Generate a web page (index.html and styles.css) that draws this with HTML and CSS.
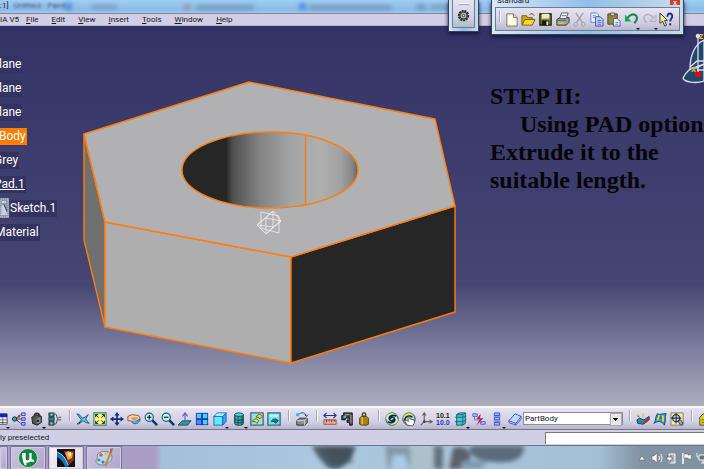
FILE: index.html
```html
<!DOCTYPE html>
<html lang="en">
<head>
<meta charset="utf-8">
<title>CATIA V5 - Part Design</title>
<link rel="stylesheet" href="styles.css">
</head>
<body>
<header>
  <div class="titlebar">
    <svg class="glass" viewBox="0 0 704 13" preserveAspectRatio="none" aria-hidden="true">
      <g fill="#5d7fa3" opacity=".55">
        <rect x="92" y="5" width="25" height="4"/><rect x="196" y="5" width="50" height="5"/><rect x="220" y="5" width="34" height="5"/><rect x="309" y="5" width="82" height="5"/><rect x="416" y="4" width="10" height="6"/><rect x="430" y="5" width="20" height="4"/>
      </g>
      <g fill="#3f84dc" opacity=".8"><rect x="65" y="3" width="7" height="7"/><rect x="299" y="3" width="7" height="7"/></g>
      <rect x="184" y="4" width="6" height="6" fill="#a06a86" opacity=".6"/>
    </svg>
    <span class="doc-title">:1]</span>
    <span class="ghost-title">Untitled - Paint</span>
  </div>
  <nav class="menubar" aria-label="Main menu">
    <button class="brand">IA V5</button>
    <button><u>F</u>ile</button>
    <button><u>E</u>dit</button>
    <button><u>V</u>iew</button>
    <button><u>I</u>nsert</button>
    <button><u>T</u>ools</button>
    <button><u>W</u>indow</button>
    <button><u>H</u>elp</button>
  </nav>
</header>

<main class="viewport">
  <svg class="model" viewBox="0 26 704 380" preserveAspectRatio="xMinYMin meet" role="img" aria-label="Hexagonal nut solid">
    <defs>
      <linearGradient id="bore" x1="182" x2="358" y1="0" y2="0" gradientUnits="userSpaceOnUse">
        <stop offset="0" stop-color="#262626"/><stop offset=".25" stop-color="#262626"/><stop offset=".29" stop-color="#505050"/><stop offset=".45" stop-color="#858585"/><stop offset=".62" stop-color="#a4a4a4"/><stop offset=".78" stop-color="#b0b0b0"/><stop offset=".9" stop-color="#a2a2a2"/><stop offset=".97" stop-color="#858585"/><stop offset="1" stop-color="#5c5c5c"/>
      </linearGradient>
    </defs>
    <g stroke="#ff7d0a" stroke-width="1.4" stroke-linejoin="round">
      <path d="M84 134 105 222V327L84 240Z" fill="#707070"/>
      <path d="M105 222 291 257V363L105 327Z" fill="#aeaeae"/>
      <path d="M291 257 455 206V312L291 363Z" fill="#262626"/>
      <path d="M249 82 435 119 455 206 291 257 105 222 84 134Z" fill="#b1b1b3"/>
      <ellipse cx="270" cy="170" rx="88" ry="38" fill="url(#bore)"/>
      <path d="M305.500 135V205" fill="none"/>
    </g>
    <path d="M261 212 279 216V233L261 228ZM273 211 257 225 266 234 281 221ZM273 211V227L266 234V218ZM257 225 273 227 281 221 266 218Z" fill="none" stroke="#efefef" stroke-width=".8"/>
    <g stroke="#e6d9f4" stroke-width="1.3">
      <path d="M704 40C695 44 690 55 690 69L704 64Z" fill="#1e4a68"/>
      <path d="M683 78C686 72 690 67 697 68L704 64V81C696 84 684 82 683 78Z" fill="#1e4a68"/>
      <path d="M690 67 697 61H704M698 36V73M697 70H704" fill="none"/>
    </g>
    <circle cx="698" cy="36" r="2.300" fill="#e6d9f4"/>
    <rect x="695" y="72" width="6" height="5" fill="#e00a0a"/>
    <text x="699" y="39" class="axis">z</text><text x="691" y="72" class="axis">x</text>
  </svg>

  <ul class="tree">
    <li><span>lane</span></li>
    <li><span>lane</span></li>
    <li><span>lane</span></li>
    <li><span class="selected">Body</span></li>
    <li class="scrolled"><span>Grey</span></li>
    <li class="scrolled"><span class="linked">Pad.1</span></li>
    <li class="child">
      <svg viewBox="0 0 9 20" aria-hidden="true"><path d="M0 0H9V20H0Z" fill="#8b93a7"/><path d="M1 1H8V19H1Z" fill="none" stroke="#c9ced8" stroke-dasharray="1 1"/><path d="M1 17C2 11 0 8 3 7S5 14 8 17ZM2 3H6V5H2Z" fill="#c6d1e1"/><path d="M4 7 7 13" stroke="#30405c"/></svg>
      <span>Sketch.1</span>
    </li>
    <li class="flush"><span>Material</span></li>
  </ul>

  <div class="note">
    <p>STEP II:</p>
    <p class="indent">Using PAD option</p>
    <p>Extrude it to the</p>
    <p>suitable length.</p>
  </div>
</main>

<section class="toolbar" aria-label="View and tools">
  <div class="group first">
    <button class="menu" aria-label="Table"><svg viewBox="0 0 16 16"><path d="M1 2H15V14H1Z" fill="#fff" stroke="#444"/><path d="M1 2H15V6H1Z" fill="#1420c0"/><path d="M1 9H15M1 12H15M6 6V14M10 6V14" stroke="#555"/></svg></button>
    <button aria-label="Structure"><svg viewBox="0 0 16 16"><path d="M4 8 10 3M4 8H11M4 8 10 13" stroke="#333" fill="none"/><circle cx="3" cy="8" r="2.500" fill="#3aa7b0" stroke="#123"/><circle cx="8" cy="5" r="1.500" fill="#c33"/><path d="M11 1H15V4H11ZM11 6.500H15V9.500H11ZM11 12H15V15H11Z" fill="#b5c5ff" stroke="#2536d8"/></svg></button>
    <button class="menu" aria-label="Filter"><svg viewBox="0 0 16 16"><path d="M2 6 7 3 13 5V12L8 15 3 13Z" fill="#555" stroke="#111"/><path d="M5 5C5 1 11 0 11 5" fill="none" stroke="#333" stroke-width="2"/><path d="M7 8 12 6V12L8 13Z" fill="#8d8d8d"/><circle cx="9" cy="10" r="1.500" fill="#222"/></svg></button>
    <button aria-label="Relations"><svg viewBox="0 0 16 16"><path d="M1 1H7V5H1ZM1 6H7V10H1ZM1 11H7V15H1Z" fill="#2a8790" stroke="#234"/><path d="M3 2H5V4H3ZM3 12H5V14H3Z" fill="#d9c65e"/><path d="M8 2C11 2 9 8 12 8 9 8 11 14 8 14M12 6H15M12 9H15" fill="none" stroke="#333"/></svg></button>
  </div>
  <i class="sep"></i>
  <div class="group">
    <button aria-label="Fly mode"><svg viewBox="0 0 16 16"><path d="M1 2 4 3 7 7 10 6 14 3 11 8 15 13 11 12 8 10 3 14 6 9Z" fill="#4fc6e4" stroke="#1c5578"/><path d="M1 14 5 11" stroke="#222"/></svg></button>
    <button aria-label="Fit all in"><svg viewBox="0 0 16 16"><path d="M1 1H15V15H1Z" fill="#f7f37c" stroke="#258b8b" stroke-width="1.300"/><path d="M3 3 6.500 6.500M13 3 9.500 6.500M3 13 6.500 9.500M13 13 9.500 9.500M3 6V3H6M10 3H13V6M3 10V13H6M10 13H13V10" stroke="#111" fill="none"/></svg></button>
    <button aria-label="Pan"><svg viewBox="0 0 16 16"><path d="M8 0 11 4H9V7H12V5L16 8 12 11V9H9V12H11L8 16 5 12H7V9H4V11L0 8 4 5V7H7V4H5Z" fill="#172c82"/></svg></button>
    <button aria-label="Rotate"><svg viewBox="0 0 16 16"><path d="M1 5 6 3 13 4 15 7 14 10 9 12 4 10 1 10Z" fill="#ffd2a7" stroke="#7b502e"/><path d="M5 7H12M6 9H11" stroke="#a06c44"/><path d="M5 11C8 15 14 14 15 8L11 10" fill="#5aa9eb" stroke="#245bae"/></svg></button>
    <button aria-label="Zoom in"><svg viewBox="0 0 16 16"><path d="M9 9 15 15" stroke="#11366d" stroke-width="3"/><circle cx="6" cy="6" r="4.700" fill="#bdf8ff" stroke="#24527d" stroke-width="1.300"/><path d="M3.500 6H8.500M6 3.500V8.500" stroke="#111" stroke-width="1.300"/></svg></button>
    <button aria-label="Zoom out"><svg viewBox="0 0 16 16"><path d="M9 9 15 15" stroke="#11366d" stroke-width="3"/><circle cx="6" cy="6" r="4.700" fill="#bdf8ff" stroke="#24527d" stroke-width="1.300"/><path d="M3.500 6H8.500" stroke="#111" stroke-width="1.300"/></svg></button>
    <button aria-label="Normal view"><svg viewBox="0 0 16 16"><path d="M5 10H15L11 15H0Z" fill="#3195a9" stroke="#155363"/><path d="M8 12V2M5 5 8 1 11 5" fill="none" stroke="#6b5bc4" stroke-width="1.300"/></svg></button>
    <button aria-label="Multi view"><svg viewBox="0 0 16 16"><path d="M1 1H15V15H1Z" fill="#24369b"/><path d="M2 2H7V7H2ZM9 9H14V14H9ZM9 2H14V7H9Z" fill="#35d7ff"/><path d="M2 9H7V14H2Z" fill="#438cff"/></svg></button>
    <button class="menu" aria-label="Isometric view"><svg viewBox="0 0 16 16"><path d="M1 5H11V15H1Z" fill="#65eaff" stroke="#1263c9"/><path d="M1 5 5 1H15L11 5Z" fill="#b7faff" stroke="#1263c9"/><path d="M11 5 15 1V11L11 15Z" fill="#29a9ee" stroke="#1263c9"/></svg></button>
    <button class="menu" aria-label="Shading"><svg viewBox="0 0 16 16"><path d="M3 3V13C3 16 13 16 13 13V3" fill="#26808b" stroke="#173b45"/><path d="M5 5V14M9 5V15" stroke="#65c7c9"/><ellipse cx="8" cy="3" rx="5" ry="2" fill="#63d2dc" stroke="#173b45"/><path d="M3 8C5 10 11 10 13 8M3 11C5 13 11 13 13 11" fill="none" stroke="#153943"/></svg></button>
    <button aria-label="Hide or show"><svg viewBox="0 0 16 16"><path d="M1 1H15V15H1Z" fill="#8fe6ea" stroke="#4b6573" stroke-width="1.500"/><path d="M3 11C4 7 8 7 10 10L8 13 6 11ZM7 6C8 2 12 2 14 5L11 8 10 6Z" fill="#f1d844" stroke="#5d561d"/></svg></button>
    <button aria-label="Swap visible space"><svg viewBox="0 0 16 16"><path d="M1 1H15V15H1Z" fill="#6fe6ef" stroke="#4b6573" stroke-width="1.500"/><path d="M3 3H13V6H3Z" fill="#b5ffff"/><path d="M5 11C6 7 11 7 13 10L10 13 8 11Z" fill="#277287" stroke="#114758"/></svg></button>
  </div>
  <i class="sep"></i>
  <div class="group"><button aria-label="Apply material"><svg viewBox="0 0 16 16"><path d="M2 10 5 7H14V12L11 15H2Z" fill="#8b8b8f" stroke="#222"/><path d="M2 10H11L14 7M11 10V15" stroke="#ddd" fill="none"/><path d="M4 3C7 0 12 0 13 5L11 3M13 5 15 3" fill="none" stroke="#2a3d90"/><circle cx="3" cy="3" r="2" fill="#20c2df"/></svg></button></div>
  <i class="sep"></i>
  <div class="group">
    <button aria-label="Measure between"><svg viewBox="0 0 16 16"><path d="M1 4H15M4 1 1 4 4 7M12 1 15 4 12 7" fill="none" stroke="#2230a0" stroke-width="1.300"/><path d="M1 9H15V14H1Z" fill="#f4b09b" stroke="#914332"/><path d="M4 9V12M7 9V11M10 9V12M13 9V11" stroke="#632"/></svg></button>
    <button aria-label="Measure item"><svg viewBox="0 0 16 16"><path d="M4 1H14V15H11V12H8V9H11V7H6V9H2V4H4Z" fill="#444" stroke="#111"/><path d="M4 4H7V7H4Z" fill="#62b4a4"/><path d="M12.500 3V13M6 3H11" stroke="#bbb"/></svg></button>
    <button aria-label="Measure inertia"><svg viewBox="0 0 16 16"><circle cx="8" cy="3" r="2" fill="none" stroke="#443300" stroke-width="1.500"/><path d="M3 7 5 5H11L13 7V14L11 15H5L3 14Z" fill="#a8831d" stroke="#4d3b04"/><path d="M6 6V14" stroke="#e7c558" stroke-width="1.500"/></svg></button>
  </div>
  <i class="sep"></i>
  <div class="group">
    <button aria-label="Update"><svg viewBox="0 0 16 16"><circle cx="8" cy="8" r="7" fill="#b6ece0" stroke="#12305a"/><path d="M2 8C2 3 8 1 12 4M14 8C14 13 8 15 4 12" fill="none" stroke="#e9ef68" stroke-width="2"/><path d="M13 5C9 2 4 5 5 8S9 11 10 8M3 11C7 14 12 11 11 8S7 5 6 8" fill="none" stroke="#08254b" stroke-width="1.700"/></svg></button>
    <button aria-label="Manual update"><svg viewBox="0 0 16 16"><circle cx="8" cy="8" r="7" fill="#b7dfbd" stroke="#15354c"/><path d="M2 7C4 2 9 1 12 4" fill="none" stroke="#dee150" stroke-width="2"/><path d="M3 10C3 5 8 3 12 6" fill="none" stroke="#08254b" stroke-width="1.500"/><path d="M6 15 3 10 5 9 7 11V5H9V8L14 9V13L12 16Z" fill="#fff" stroke="#444"/></svg></button>
    <button aria-label="Axis system"><svg viewBox="0 0 16 16"><path d="M6 2V11H14M6 11 2 15M4 4 6 1 8 4M12 9 15 11 12 13" fill="none" stroke="#6a6051" stroke-width="1.300"/><circle cx="6" cy="11" r="1.500" fill="#444"/></svg></button>
    <button aria-label="Mean dimensions"><svg viewBox="0 0 16 16"><text x="0" y="7" class="dim">10.1</text><text x="0" y="15" class="dim blue">10.0</text></svg></button>
    <button class="menu" aria-label="Solid section"><svg viewBox="0 0 16 16"><path d="M3 3 6 1H13V13L10 15H3Z" fill="#42c9d0" stroke="#16515b"/><path d="M3 3H10V15M10 3 13 1M1 6H10L14 5M1 11H10L14 9" fill="none" stroke="#176470"/></svg></button>
    <button aria-label="Break relation"><svg viewBox="0 0 16 16"><path d="M1 2H6V5H1ZM10 11H15V14H10Z" fill="#b7c7ff" stroke="#4555ce"/><path d="M3 5V9H9V12H11" fill="none" stroke="#5767c6"/><path d="M10 2 5 8H9L5 15 13 7H9Z" fill="#cc1537"/></svg></button>
    <button class="menu" aria-label="Stack"><svg viewBox="0 0 16 16"><path d="M5 1H11V4H5ZM5 6H11V9H5ZM5 12H11V15H5Z" fill="#97b5ff" stroke="#3447da"/><path d="M4 4.500H12M4 10.500H12" stroke="#5763bd"/></svg></button>
    <button aria-label="Only current body"><svg viewBox="0 0 16 16"><path d="M1 10 8 2 15 5 9 13Z" fill="#bcd8ff" stroke="#304bd8"/><path d="M1 10V12L9 15 15 8V5M9 13V15" fill="none" stroke="#304bd8"/></svg></button>
  </div>
  <label class="body-picker"><select aria-label="Current body"><option>PartBody</option></select></label>
  <i class="sep"></i>
  <div class="group">
    <button aria-label="Draft analysis"><svg viewBox="0 0 16 16"><path d="M1 9 4 7 9 9 15 5V9L8 14 2 13Z" fill="#218c9c" stroke="#103d5a"/><path d="M8 12 15 6V9L9 14Z" fill="#c91e31"/><path d="M2 2 5 5M8 1V6" stroke="#d8b817"/><path d="M1 4 4 6" stroke="#d22"/></svg></button>
    <button aria-label="Curvature analysis"><svg viewBox="0 0 16 16"><path d="M1 13C4 10 2 6 5 2 8 4 12 1 15 2 13 6 15 10 13 15 10 10 5 10 1 13Z" fill="#24a9cf" stroke="#123a70"/><path d="M6 4C9 5 4 7 6 9M12 4C10 6 13 8 11 11" fill="none" stroke="#eedf34" stroke-width="2"/><path d="M8 5 9 8" stroke="#d72b24" stroke-width="2"/></svg></button>
    <button aria-label="Tap and thread analysis"><svg viewBox="0 0 16 16"><path d="M1 1H15V15H1Z" fill="#f1ec91" stroke="#777"/><circle cx="7" cy="7" r="4" fill="#d7ddb2" stroke="#263861" stroke-width="1.500"/><path d="M7 1V13M1 7H13M10 10 14 14" stroke="#263861" stroke-width="1.300"/><path d="M9 10 12 9 15 13 12 15Z" fill="#9da0c9" stroke="#263861"/></svg></button>
  </div>
  <i class="sep"></i>
  <div class="group"><button aria-label="Catalog"><svg viewBox="0 0 16 16"><path d="M2 6 6 2H15V13L11 15H2Z" fill="#e1c931" stroke="#4d4718"/><path d="M4 9H12M4 12H12" stroke="#665d20"/></svg></button></div>
</section>

<section class="status">
  <output>ly preselected</output>
  <input type="text" aria-label="Power input">
</section>

<footer class="taskbar">
  <svg class="wallpaper" viewBox="0 0 704 24" preserveAspectRatio="none" aria-hidden="true">
    <g class="smudge">
      <path d="M312 0H356Q350 20 338 24H330Q318 14 312 0Z" fill="#4c5b69"/>
      <path d="M320 0H352V18H334Z" fill="#3f4954" opacity=".6"/>
      <path d="M385 0H412V24H388Z" fill="#8499a8"/><path d="M410 0H435V24H410Z" fill="#acc0c9"/>
      <path d="M393 9H405L409 24H390Z" fill="#a8c9ea"/>
      <path d="M434 0H443V24H434Z" fill="#627280"/><path d="M453 2Q472 -2 470 14L460 24H449Z" fill="#5c6068"/>
      <path d="M470 0H524Q524 18 500 17T470 7Z" fill="#5b6b79"/><path d="M462 15H490L480 24H460Z" fill="#7f9aad"/>
    </g>
  </svg>
  <nav class="tasks" aria-label="Open programs">
    <button class="task cut" aria-label="Pinned program"></button>
    <button class="task" aria-label="uTorrent"><svg viewBox="0 0 20 20"><circle cx="10" cy="10" r="9.500" fill="#128442" stroke="#e7f4e9" stroke-width=".7"/><path d="M6.500 5V10.500Q6.500 13.500 9.500 13.500T12.500 10V5M12.500 10Q12.500 13.500 16 12.500M5 5Q5.500 14 8 17" fill="none" stroke="#fff" stroke-width="2.300"/></svg></button>
    <button class="task active" aria-label="CATIA"><svg viewBox="0 0 20 20"><path d="M1 1H19V19H1Z" fill="#111018"/><path d="M8 3H18V12L13 17Z" fill="#88350e"/><path d="M9 5 12 3 17 5 16 10 12 12Z" fill="#ff9d36"/><path d="M12 5 15 4V8L13 9Z" fill="#fff6bd"/><path d="M1 4Q10 7 13 18L9 19Q7 12 1 9Z" fill="#1678c0"/><path d="M1 4Q9 7 12 17" fill="none" stroke="#86d8ff"/></svg></button>
    <button class="task" aria-label="Paint"><svg viewBox="0 0 20 20"><path d="M3 7C7 1 18 3 18 9S10 19 4 16C-1 13 5 12 3 7Z" fill="#b8d9ed" stroke="#628eb1"/><circle cx="7" cy="7" r="1.800" fill="#e25743"/><circle cx="12" cy="6" r="1.600" fill="#e3bd37"/><circle cx="5" cy="12" r="1.600" fill="#4aa266"/><circle cx="9" cy="14" r="1.600" fill="#407bc8"/><path d="M11 18 17 4" stroke="#d28232" stroke-width="2"/><path d="M16 5 16 1 19 0 18 5Z" fill="#a57144"/></svg></button>
  </nav>
  <div class="tray">
    <button aria-label="Show hidden icons"><svg viewBox="0 0 12 12"><path d="M3 8 6 4 9 8Z" fill="#fff" stroke="#66737d" stroke-width=".7"/></svg></button>
    <button aria-label="Volume"><svg viewBox="0 0 12 12"><path d="M1 4H3L6 1V11L3 8H1Z" fill="#fff" stroke="#5c6a75" stroke-width=".6"/><path d="M8 4Q9 6 8 8M10 2Q12 6 10 10" fill="none" stroke="#f4f7f9"/></svg></button>
    <button aria-label="Power"><svg viewBox="0 0 12 12"><path d="M3 2H9V11H3Z" fill="#a9b4bd" stroke="#f8fafb"/><path d="M1 5H6V8H4V11H3V8H1ZM2 3V5M5 3V5" fill="#fff" stroke="#4d5862" stroke-width=".6"/></svg></button>
    <button aria-label="Action center"><svg viewBox="0 0 12 12"><path d="M2 1V12" stroke="#fff" stroke-width="1.500"/><path d="M3 2H7V3H11L10 5 11 7H7V6H3Z" fill="#f6f8f9" stroke="#5a6670" stroke-width=".5"/></svg></button>
    <button aria-label="Network"><svg viewBox="0 0 12 12"><path d="M3 3H11V8H3ZM5 11H10M7 8V11M1 1V5H3" fill="#66737d" stroke="#f5f7f8"/></svg></button>
  </div>
</footer>

<section class="float compact" aria-label="Workbench">
  <div class="float-body"><i class="grip flat"></i>
    <button aria-label="Part Design"><svg viewBox="0 0 16 16"><path d="M2 3V15L14 14Z" fill="#8fd6bd"/><circle cx="8" cy="7" r="5" fill="#a6a6a6" stroke="#222" stroke-width="2" stroke-dasharray="2 1"/><circle cx="8" cy="7" r="3.800" fill="#b9b9b9" stroke="#333" stroke-width="1.200"/><circle cx="8" cy="7" r="1.300" fill="#eee" stroke="#333"/></svg></button>
  </div>
</section>
<section class="float standard" aria-label="Standard toolbar">
  <div class="float-head"><h2>Standard</h2><button class="close" aria-label="Close">x</button></div>
  <div class="float-body"><i class="grip"></i>
    <button aria-label="New"><svg viewBox="0 0 16 16"><path d="M3 2H10L14 6V15H3Z" fill="#ffffe2" stroke="#737366"/><path d="M10 2V6H14" fill="#ddd7a0" stroke="#737366"/></svg></button>
    <button aria-label="Open"><svg viewBox="0 0 16 16"><path d="M1 13V4H6L7 6H12V8" fill="#d8a90c" stroke="#755900"/><path d="M1 14 4 8H15L12 14Z" fill="#ffd52e" stroke="#755900"/><path d="M9 3Q12 0 14 4" fill="none" stroke="#665000"/></svg></button>
    <button aria-label="Save"><svg viewBox="0 0 16 16"><path d="M2 2H14V14H2Z" fill="#8a8b13" stroke="#171700" stroke-width="1.300"/><path d="M4 2H12V7H4Z" fill="#e9e9dc"/><path d="M4 9H12V14H4Z" fill="#171717"/><path d="M9 10H11V14H9Z" fill="#eee"/></svg></button>
    <button aria-label="Print"><svg viewBox="0 0 16 16"><path d="M2 8 5 6H15V11L12 14H2Z" fill="#a0a08f" stroke="#333"/><path d="M5 7 7 1H14L12 7Z" fill="#fff" stroke="#555"/><path d="M7 4H12M2 9H12" stroke="#426ab0"/><path d="M3 11H10V13H3Z" fill="#d4c641"/></svg></button>
    <button aria-label="Cut" disabled><svg viewBox="0 0 16 16"><path d="M4 1 11 11M12 1 5 11" stroke="#a2a0aa" stroke-width="1.500"/><circle cx="4" cy="13" r="2" fill="none" stroke="#a2a0aa"/><circle cx="12" cy="13" r="2" fill="none" stroke="#a2a0aa"/></svg></button>
    <button aria-label="Copy"><svg viewBox="0 0 16 16"><path d="M2 1H8L10 3V11H2Z" fill="#eef3ff" stroke="#7182b7"/><path d="M7 5H12L15 8V15H7Z" fill="#bed0ff" stroke="#4355a3"/><path d="M9 9H13M9 11H13M9 13H13M4 4H7M4 6H6" stroke="#5870c5"/></svg></button>
    <button aria-label="Paste"><svg viewBox="0 0 16 16"><path d="M2 2H12V13H2Z" fill="#938736" stroke="#514810"/><path d="M5 1H9V4H5Z" fill="#ddd" stroke="#555"/><path d="M8 7H12L15 10V15H8Z" fill="#eef4ff" stroke="#4b5aa0"/><path d="M10 11H13M10 13H13" stroke="#5870c5"/></svg></button>
    <button class="menu" aria-label="Undo"><svg viewBox="0 0 16 16"><path d="M3 7Q9 0 13 4C15 7 13 10 11 12" fill="none" stroke="#148b4b" stroke-width="2.200"/><path d="M1 3V10H8Z" fill="#19a856"/></svg></button>
    <button class="menu" aria-label="Redo" disabled><svg viewBox="0 0 16 16"><path d="M13 7Q7 0 3 4C1 7 3 10 5 12" fill="none" stroke="#b2b0bc" stroke-width="1.600"/><path d="M15 3V10H8Z" fill="#cfcdd8" stroke="#b2b0bc"/></svg></button>
    <button aria-label="What's this?"><svg viewBox="0 0 16 16"><path d="M1 1V12L4 10 6 15 8 14 6 9H9Z" fill="#f2ef84" stroke="#27334b"/><path d="M9 5C9 0 15 1 14 5 14 7 12 7 12 10M12 12V14" fill="none" stroke="#122b7c" stroke-width="2"/></svg></button>
  </div>
</section>
</body>
</html>
```
FILE: styles.css
```css
* { box-sizing: border-box; }
body {
  margin: 0;
  min-height: 100vh;
  display: flex;
  flex-direction: column;
  overflow: hidden;
  position: relative;
  font: 8px/12px Roboto, "Liberation Sans", sans-serif;
  color: #16161f;
}
button {
  padding: 0;
  border: 0;
  background: none;
  font: inherit;
  color: inherit;
}
svg { display: block; }

/* Title and menu */
.titlebar {
  position: relative;
  height: 13px;
  display: flex;
  gap: 5px;
  overflow: hidden;
  background: linear-gradient(#a0cdf3, #8abbe8 10px, #a9cae5);
}
.glass {
  position: absolute;
  inset: 0;
  width: 100%;
  height: 100%;
  filter: blur(2px);
}
.doc-title { position: relative; }
.ghost-title {
  position: relative;
  color: #39506b;
  filter: blur(1px);
}
.menubar {
  height: 13px;
  display: flex;
  align-items: flex-start;
  gap: 13px;
  background: #d1cfe5;
  border-top: 1px solid #7c8799;
  border-bottom: 1px solid #b3b0c8;
  line-height: 12px;
}
.menubar .brand { margin-right: -6px; }

/* 3D view */
.viewport {
  flex: 1;
  display: grid;
  grid-template-columns: minmax(0, 490fr) minmax(0, 214fr);
  grid-template-rows: minmax(380px, 1fr);
  overflow: hidden;
  background: linear-gradient(#333366, #464674 68%, #7e7e9e 85%, #adadbf);
}
.model {
  grid-area: 1 / 1 / 2 / 3;
  width: 100%;
}
.axis {
  font: bold 9px "Open Sans", sans-serif;
  fill: #cbc22c;
}
.tree {
  grid-area: 1 / 1;
  align-self: start;
  margin: 26px 0 0;
  padding: 0;
  list-style: none;
  color: #fff;
  font-size: 12px;
  line-height: 17px;
}
.tree li {
  height: 24px;
  display: flex;
  align-items: center;
  margin-left: -1px;
}
.tree span {
  padding-right: 1px;
  background: #333362;
}
.tree .selected { background: #ff7d00; }
.tree .linked { text-decoration: underline; }
.tree .scrolled { margin-left: -6px; }
.tree .flush { margin-left: -5px; }
.tree .child {
  margin-left: 0;
  gap: 1px;
}
.tree svg {
  width: 9px;
  height: 20px;
}
.note {
  grid-area: 1 / 2;
  padding-top: 56px;
  font: bold 24px/28px "Liberation Serif", serif;
  color: #050507;
  white-space: nowrap;
}
.note p { margin: 0; }
.note .indent { padding-left: 30px; }

/* Bottom toolbar */
.toolbar {
  height: 24px;
  display: flex;
  align-items: center;
  overflow: hidden;
  border-top: 2px solid #f7f7fb;
  border-bottom: 1px solid #77758a;
  background: linear-gradient(#e5e4f0, #cfcde2 70%, #b7b5ca);
}
.group {
  display: flex;
  flex: none;
}
.group.first { margin-left: -9px; }
.group button,
.float-body button {
  position: relative;
  width: 17px;
  height: 17px;
  flex: none;
}
.group .menu { width: 19px; }
.group svg {
  width: 14px;
  height: 14px;
  margin: auto;
}
.group .menu::after,
.float .menu::after {
  content: "";
  position: absolute;
  right: 0;
  bottom: -2px;
  border: 2px solid transparent;
  border-top-color: #000;
  border-bottom: 0;
}
.sep {
  flex: none;
  width: 2px;
  height: 11px;
  margin: 0 3px 6px 6px;
  border-left: 1px solid #a7a5b8;
  border-right: 1px solid #fff;
}
.dim {
  font: bold 8px "Liberation Sans", sans-serif;
  fill: #1b1b24;
}
.dim.blue { fill: #1d32c4; }
.body-picker {
  position: relative;
  flex: 0 0 100px;
  display: flex;
}
.body-picker select {
  width: 100%;
  height: 13px;
  padding: 0 1px;
  appearance: none;
  border: 1px solid #8c8b9b;
  border-radius: 0;
  background: #fff;
  font: inherit;
  line-height: 10px;
  color: #16161f;
}
.body-picker::after {
  content: "";
  position: absolute;
  right: 1px;
  top: 1px;
  width: 10px;
  height: 11px;
  border: 1px solid #aaa;
  background: linear-gradient(#000, #000) 2px 4px / 5px 1px no-repeat, linear-gradient(#000, #000) 3px 5px / 3px 1px no-repeat, linear-gradient(#000, #000) 4px 6px / 1px 1px no-repeat, #e6e6ea;
}

/* Status line */
.status {
  height: 15px;
  display: grid;
  grid-template-columns: 545fr 159fr;
  align-items: center;
  background: #d0cfe6;
}
.status input {
  width: 100%;
  height: 12px;
  padding: 0 2px;
  border: 0;
  border-top: 1px solid #777;
  border-left: 1px solid #777;
  background: #fff;
  font: inherit;
}

/* Taskbar */
.taskbar {
  position: relative;
  height: 24px;
  display: flex;
  justify-content: space-between;
  overflow: hidden;
  border-top: 1px solid #697889;
  background: linear-gradient(90deg, #aa9ec7 22%, #a5bfda 23%, #abc8df 45%, #a4bfd5 85%, #8192a3 91%);
}
.wallpaper {
  position: absolute;
  inset: 0;
  width: 100%;
  height: 100%;
}
.smudge { filter: blur(2px); }
.tasks {
  position: relative;
  display: flex;
  gap: 2px;
}
.task {
  width: 36px;
  display: grid;
  place-items: center;
  border: 1px solid #7c7297;
  border-bottom: 0;
  border-radius: 2px 2px 0 0;
  box-shadow: inset 0 0 0 1px #d4cbe4;
  background: linear-gradient(135deg, #cdc5df, #b1a5cb);
}
.task.cut {
  width: 8px;
  border-left: 0;
}
.task.active { background: linear-gradient(135deg, #f6f3fa, #ddd6e9); }
.task svg {
  width: 20px;
  height: 20px;
}
.tray {
  position: relative;
  display: flex;
  align-items: center;
  gap: 3px;
  margin-right: -4px;
}
.tray svg {
  width: 12px;
  height: 12px;
}

/* Floating tool windows */
.float {
  position: absolute;
  top: 0;
  padding: 0 3px 3px;
  border: 1px solid #35435a;
  border-top: 0;
  background: linear-gradient(90deg, #d6e9f8, #8fbfe8 50%, #c9dcea);
  box-shadow: 0 2px 4px #15153a;
}
.float-body {
  display: flex;
  align-items: center;
  border: 1px solid #6f7d90;
  background: linear-gradient(#e6e4f2, #cfcde2 70%, #b9b7cc);
}
.float-body svg {
  width: 15px;
  height: 15px;
  margin: auto;
}
.compact { left: 448px; }
.compact .float-body {
  height: 28px;
  width: 23px;
  flex-direction: column;
  border-top: 0;
  padding-top: 3px;
  gap: 3px;
}
.standard { left: 491px; }
.standard .float-body {
  height: 24px;
  padding-right: 4px;
}
.float-head {
  height: 7px;
  display: flex;
  justify-content: space-between;
  overflow: hidden;
}
.float-head h2 {
  margin: -4px 0 0 2px;
  font-size: 8px;
  font-weight: 400;
  line-height: 10px;
}
.float-head .close {
  width: 10px;
  height: 5px;
  overflow: hidden;
  background: #c6452f;
  color: #fff;
  line-height: 4px;
}
.grip {
  width: 2px;
  height: 12px;
  margin: 0 2px 4px 3px;
  border-left: 1px solid #a7a5b8;
  border-right: 1px solid #fff;
}
.grip.flat {
  width: 10px;
  height: 2px;
  margin: 0;
  border: 0;
  border-top: 1px solid #fff;
  border-bottom: 1px solid #a7a5b8;
}
.float .menu { width: 18px; }
```
